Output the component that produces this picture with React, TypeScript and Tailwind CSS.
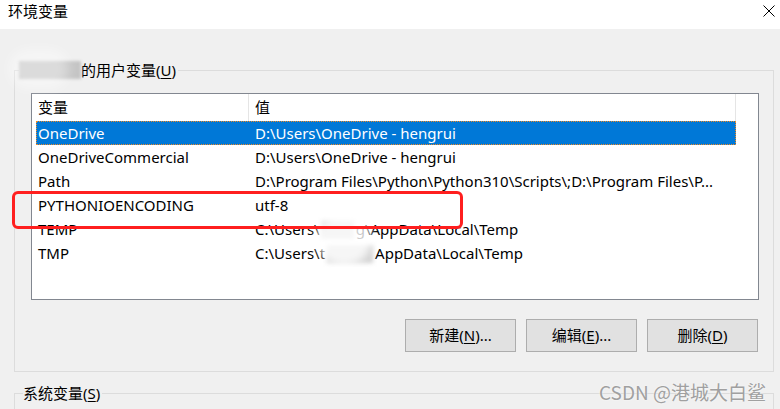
import React from "react";

const font = { fontFamily: '"Noto Sans", "Noto Sans CJK SC", sans-serif' };

function CloseIcon() {
  return (
    <svg width="12" height="12" viewBox="0 0 12 12" className="block">
      <path d="M0.5 0.5 L11.5 11.5 M11.5 0.5 L0.5 11.5" stroke="#000" strokeWidth="1" />
    </svg>
  );
}

function Blur({ w }: { w: number }) {
  return (
    <span className="relative inline-block h-[18px] align-[-4px]" style={{ width: w }}>
      <span className="absolute inset-x-[2px] top-0 bottom-0 bg-[#d2d2d2] blur-[2px]" />
    </span>
  );
}

type Row = { name: string; value: React.ReactNode; selected?: boolean };

const rows: Row[] = [
  { name: "OneDrive", value: "D:\\Users\\OneDrive - hengrui", selected: true },
  { name: "OneDriveCommercial", value: "D:\\Users\\OneDrive - hengrui" },
  { name: "Path", value: "D:\\Program Files\\Python\\Python310\\Scripts\\;D:\\Program Files\\P..." },
  { name: "PYTHONIOENCODING", value: "utf-8" },
  {
    name: "TEMP",
    value: (
      <>
        C:\Users\
        <Blur w={36} />
        g\AppData\Local\Temp
      </>
    ),
  },
  {
    name: "TMP",
    value: (
      <>
        C:\Users\t
        <Blur w={50} />
        AppData\Local\Temp
      </>
    ),
  },
];

function Btn({ label, k, rest }: { label: string; k: string; rest: string }) {
  return (
    <button className="w-[111px] h-[33px] bg-[#e1e1e1] border border-[#adadad] text-[15px] text-black leading-none flex items-center justify-center">
      {label}(<span className="underline underline-offset-2">{k}</span>){rest}
    </button>
  );
}

export default function App() {
  return (
    <div className="relative w-[780px] h-[409px] overflow-hidden bg-[#f0f0f0] text-black" style={font}>
      {/* title bar */}
      <div className="h-[29px] bg-white flex items-start justify-between pl-[8px] pr-[5px]">
        <span className="text-[15px] leading-[15px] pt-[4px]">环境变量</span>
        <span className="pt-[5px]">
          <CloseIcon />
        </span>
      </div>

      {/* user variables group */}
      <div className="relative mt-[41px] ml-[14px] w-[760px] h-[302px] border border-[#dcdcdc]">
        <div className="absolute -top-[11px] left-[4px] flex items-center bg-[#f0f0f0] pr-[2px] text-[15px] leading-[20px]">
          <span className="relative inline-block w-[62px] h-[18px]">
            <span className="absolute inset-0 bg-[#c4c4c4] blur-[1.5px]" />
            <span className="absolute -left-[10px] -top-[12px] w-[60px] h-[40px] rounded-full bg-white/40 blur-[6px]" />
          </span>
          <span>
            的用户变量(<span className="underline underline-offset-2">U</span>)
          </span>
        </div>

        <div className="pl-[16px] pt-[22px]">
          <div className="w-[728px] h-[207px] border border-[#828790] bg-white text-[15px]">
            {/* header */}
            <div className="flex h-[27px] items-center">
              <div className="w-[217px] h-full pl-[6px] flex items-center border-r border-[#e5e5e5]">变量</div>
              <div className="w-[487px] h-full pl-[6px] flex items-center border-r border-[#e5e5e5]">值</div>
            </div>
            {/* rows */}
            <div className="flex flex-col">
              {rows.map((r) => (
                <div
                  key={r.name}
                  className={
                    r.selected
                      ? "flex h-[24px] items-center ml-[4px] w-[700px] bg-[#0078d7] text-white outline-1 outline-dotted outline-[#f08a24] -outline-offset-1"
                      : "flex h-[24px] items-center ml-[4px] w-[700px]"
                  }
                >
                  <div className="w-[213px] pl-[2px] whitespace-nowrap">{r.name}</div>
                  <div className="flex-1 pl-[6px] whitespace-nowrap">{r.value}</div>
                </div>
              ))}
            </div>
          </div>
        </div>

        <div className="flex justify-end gap-[10px] pr-[15px] mt-[19px]">
          <Btn label="新建" k="N" rest="..." />
          <Btn label="编辑" k="E" rest="..." />
          <Btn label="删除" k="D" rest="" />
        </div>
      </div>

      {/* system variables group */}
      <div className="relative mt-[21px] ml-[14px] w-[760px] h-[40px] border border-[#dcdcdc]">
        <div className="absolute -top-[11px] left-[8px] bg-[#f0f0f0] pr-[2px] text-[15px] leading-[20px]">
          系统变量(<span className="underline underline-offset-2">S</span>)
        </div>
      </div>

      {/* blur blob over TEMP/TMP */}
      <div className="absolute left-[316px] top-[212px] w-[56px] h-[54px] rounded-full bg-white/80 blur-[4px]" />

      {/* red annotation rectangle */}
      <div className="absolute left-[12px] top-[191px] w-[451px] h-[38px] rounded-[6px] border-[3.5px] border-[#ff1f1f]" />

      {/* watermark */}
      <div
        className="absolute right-[14px] bottom-[6px] text-[19px] leading-[22px] text-[#a0a0a0] [text-shadow:0_0_2px_#ffffff]"
        style={{ fontFamily: '"Noto Sans CJK SC", "Noto Sans", sans-serif' }}
      >
        CSDN @港城大白鲨
      </div>
    </div>
  );
}
